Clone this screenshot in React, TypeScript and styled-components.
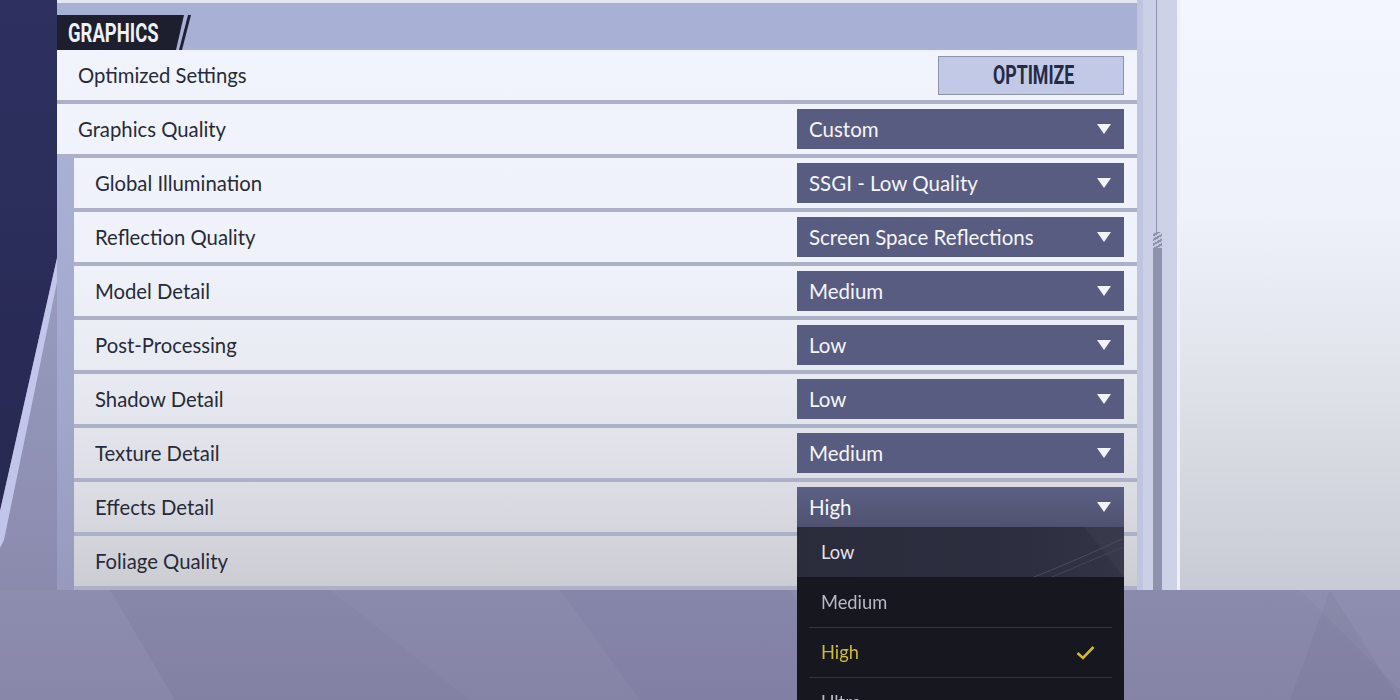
import React from 'react';
import styled, { createGlobalStyle, css } from 'styled-components';

const GlobalStyle = createGlobalStyle`
  html, body {
    margin: 0;
    padding: 0;
    width: 1400px;
    height: 700px;
    overflow: hidden;
    background: #8e8fb2;
  }
  body {
    font-family: Lato, "Liberation Sans", sans-serif;
  }
  * {
    box-sizing: border-box;
  }
`;

const Backdrop = styled.svg`
  position: fixed;
  left: 0;
  top: 0;
  width: 1400px;
  height: 700px;
  z-index: 0;
`;

const Screen = styled.div`
  position: relative;
  z-index: 1;
  display: flex;
  align-items: flex-start;
  height: 700px;
  padding-left: 57px;
`;

const Panel = styled.section`
  width: 1080px;
  display: flex;
  flex-direction: column;
`;

const TopEdge = styled.div`
  height: 3px;
  background: #e3e6f3;
`;

const SectionHeader = styled.header`
  height: 47px;
  background: #a9b0d6;
  display: flex;
  align-items: flex-end;
`;

const Tab = styled.div`
  width: 127px;
  height: 35px;
  padding-left: 11px;
  display: flex;
  align-items: center;
  overflow: hidden;
  background: #1d1e2e;
  clip-path: polygon(0 0, 100% 0, calc(100% - 8px) 100%, 0 100%);
`;

const Condensed = styled.span<{ $size: number; $color: string }>`
  display: inline-block;
  font-family: Roboto, "Liberation Sans", sans-serif;
  font-weight: 700;
  font-size: ${p => p.$size}px;
  line-height: 1;
  color: ${p => p.$color};
  transform: scaleX(0.71);
  transform-origin: left center;
  white-space: nowrap;
`;

const Slash = styled.div`
  width: 12px;
  height: 35px;
  margin-left: -5px;
  background: #202134;
  clip-path: polygon(9px 0, 12px 0, 3px 100%, 0 100%);
`;

const rowSurface = css`
  background: linear-gradient(
      180deg,
      #f1f4fc 0px,
      #eff2fa 260px,
      #e9ebf2 370px,
      #e1e2e9 450px,
      #d9dae1 510px,
      #cbccd2 590px
    )
    fixed;
`;

const Row = styled.div`
  height: 54px;
  padding: 0 13px 0 21px;
  display: flex;
  align-items: center;
  justify-content: space-between;
  border-bottom: 4px solid #adb1c7;
  ${rowSurface};
`;

const Label = styled.span`
  font-size: 20.3px;
  color: #272a38;
`;

const SubGroup = styled.div`
  padding-left: 17px;
  background: linear-gradient(180deg, #a9b0d6 0%, #a2a6cb 60%, #9799bd 100%);
`;

const OptimizeButton = styled.button`
  width: 186px;
  height: 39px;
  margin-top: 1px;
  padding: 0 0 0 54px;
  display: flex;
  align-items: center;
  background: #c1c9e6;
  border: 1px solid #8d93ab;
  cursor: pointer;
`;

const Select = styled.div<{ $open?: boolean }>`
  position: relative;
  width: 327px;
  height: 40px;
  padding: 0 13px 0 12px;
  display: flex;
  align-items: center;
  justify-content: space-between;
  background: ${p =>
    p.$open ? 'linear-gradient(180deg, #5c6084 0%, #4f526f 100%)' : '#585c81'};
  color: #f4f5fb;
  font-size: 20.5px;
`;

const Menu = styled.ul`
  position: absolute;
  top: 100%;
  left: 0;
  z-index: 10;
  width: 327px;
  margin: 0;
  padding: 0;
  list-style: none;
  background: #16171f;
`;

const MenuItem = styled.li<{ $hover?: boolean; $selected?: boolean; $divider?: boolean }>`
  position: relative;
  height: 50px;
  padding: 0 29px 0 24px;
  display: flex;
  align-items: center;
  justify-content: space-between;
  font-size: 18.3px;
  color: ${p => (p.$selected ? '#cbba3c' : p.$hover ? '#e2e3ea' : '#b9bac4')};
  background: ${p =>
    p.$hover ? 'linear-gradient(90deg, #2a2b3b 0%, #2d2e3f 70%, #333446 100%)' : 'transparent'};
  overflow: hidden;

  ${p =>
    p.$divider &&
    css`
      &::before {
        content: '';
        position: absolute;
        top: 0;
        left: 12px;
        right: 12px;
        height: 1px;
        background: #33343f;
      }
    `}
`;

const HoverSweep = styled.svg`
  position: absolute;
  right: 0;
  bottom: 0;
`;

const ScrollColumn = styled.div`
  width: 40px;
  height: 590px;
  padding-left: 16px;
  display: flex;
  background: linear-gradient(90deg, #bfc5de 0, #bfc5de 6px, #cbd0e6 6px, #cdd2e7 100%);
`;

const Track = styled.div`
  width: 9px;
  height: 100%;
  display: flex;
  flex-direction: column;
  background: linear-gradient(90deg, transparent 3px, #8f95b1 3px, #8f95b1 4px, transparent 4px);
`;

const Thumb = styled.div`
  margin-top: 232px;
  flex: 1;
  background: linear-gradient(
      180deg,
      transparent 0,
      transparent 16px,
      #8d93ad 16px
    ),
    repeating-linear-gradient(150deg, #c4c8dc 0 2px, #8d93ad 2px 4px);
`;

const SidePanel = styled.aside`
  flex: 1;
  height: 590px;
  border-left: 3px solid #eef1fa;
  background: linear-gradient(
    180deg,
    #f3f6fe 0%,
    #eff2fa 35%,
    #e3e5ed 60%,
    #d6d8e0 80%,
    #c9cbd4 100%
  );
`;

const Arrow = () => (
  <svg width="14" height="10" viewBox="0 0 14 10">
    <polygon points="0,0 14,0 7,10" fill="#f2f3f9" />
  </svg>
);

const Check = () => (
  <svg width="19" height="15" viewBox="0 0 19 15">
    <path d="M1.5 8 L7 13 L17.5 2" stroke="#cbba3c" strokeWidth="2.6" fill="none" />
  </svg>
);

type Setting = { label: string; value: string; open?: boolean };

const subSettings: Setting[] = [
  { label: 'Global Illumination', value: 'SSGI - Low Quality' },
  { label: 'Reflection Quality', value: 'Screen Space Reflections' },
  { label: 'Model Detail', value: 'Medium' },
  { label: 'Post-Processing', value: 'Low' },
  { label: 'Shadow Detail', value: 'Low' },
  { label: 'Texture Detail', value: 'Medium' },
  { label: 'Effects Detail', value: 'High', open: true },
  { label: 'Foliage Quality', value: 'High' },
];

const levels = ['Low', 'Medium', 'High', 'Ultra'];

const Background = () => (
  <Backdrop viewBox="0 0 1400 700">
    <defs>
      <linearGradient id="bg" x1="0" y1="0" x2="0" y2="1">
        <stop offset="0" stopColor="#a3a6cd" />
        <stop offset="0.6" stopColor="#9294b7" />
        <stop offset="1" stopColor="#8584a7" />
      </linearGradient>
      <linearGradient id="dark" x1="0" y1="0" x2="0" y2="1">
        <stop offset="0" stopColor="#2e3060" />
        <stop offset="1" stopColor="#272952" />
      </linearGradient>
    </defs>
    <rect width="1400" height="700" fill="url(#bg)" />
    <polygon points="0,590 110,590 175,700 0,700" fill="#ffffff" opacity="0.03" />
    <polygon points="110,590 330,590 470,700 175,700" fill="#000000" opacity="0.02" />
    <polygon points="560,590 790,590 850,700 640,700" fill="#2a2860" opacity="0.03" />
    <polygon points="1300,590 1400,590 1400,690" fill="#ffffff" opacity="0.04" />
    <polygon points="1330,590 1400,700 1290,700" fill="#000000" opacity="0.03" />
    <polygon points="0,0 57,0 57,258 0,511" fill="url(#dark)" />
    <polygon points="57,258 57,282 4,540 0,548 0,511" fill="#c8cbef" opacity="0.9" />
  </Backdrop>
);

const App = () => (
  <>
    <GlobalStyle />
    <Background />
    <Screen>
      <Panel>
        <TopEdge />
        <SectionHeader>
          <Tab>
            <Condensed $size={26} $color="#eef0fa">GRAPHICS</Condensed>
          </Tab>
          <Slash />
        </SectionHeader>

        <Row>
          <Label>Optimized Settings</Label>
          <OptimizeButton>
            <Condensed $size={25} $color="#262a44">OPTIMIZE</Condensed>
          </OptimizeButton>
        </Row>

        <Row>
          <Label>Graphics Quality</Label>
          <Select>
            Custom
            <Arrow />
          </Select>
        </Row>

        <SubGroup>
          {subSettings.map(s => (
            <Row key={s.label}>
              <Label>{s.label}</Label>
              <Select $open={s.open}>
                {s.value}
                <Arrow />
                {s.open && (
                  <Menu>
                    {levels.map((lv, i) => (
                      <MenuItem
                        key={lv}
                        $hover={i === 0}
                        $selected={lv === s.value}
                        $divider={i >= 2}
                      >
                        {lv}
                        {lv === s.value && <Check />}
                        {i === 0 && (
                          <HoverSweep width="120" height="50" viewBox="0 0 120 50">
                            <polygon points="80,0 120,0 120,50" fill="#ffffff" opacity="0.03" />
                            <path d="M30 50 Q 80 30 118 12" stroke="#4a4b5e" strokeWidth="1" fill="none" />
                            <path d="M48 50 Q 90 32 120 20" stroke="#44455a" strokeWidth="1" fill="none" />
                          </HoverSweep>
                        )}
                      </MenuItem>
                    ))}
                  </Menu>
                )}
              </Select>
            </Row>
          ))}
        </SubGroup>
      </Panel>

      <ScrollColumn>
        <Track>
          <Thumb />
        </Track>
      </ScrollColumn>

      <SidePanel />
    </Screen>
  </>
);

export default App;
